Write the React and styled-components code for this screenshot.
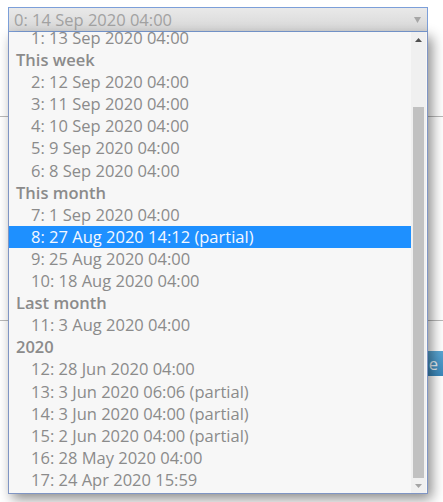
import React, { useLayoutEffect, useRef } from 'react';
import styled, { createGlobalStyle } from 'styled-components';

const GlobalStyle = createGlobalStyle`
  html, body {
    margin: 0;
    padding: 0;
    background: #ffffff;
    font-family: "Open Sans", "DejaVu Sans", sans-serif;
  }
  * { box-sizing: border-box; }
`;

// first group is the tail of "Yesterday", already scrolled past its label
const groups = [
  { label: null, items: [{ id: 1, text: '13 Sep 2020 04:00' }] },
  {
    label: 'This week',
    items: [
      { id: 2, text: '12 Sep 2020 04:00' },
      { id: 3, text: '11 Sep 2020 04:00' },
      { id: 4, text: '10 Sep 2020 04:00' },
      { id: 5, text: '9 Sep 2020 04:00' },
      { id: 6, text: '8 Sep 2020 04:00' },
    ],
  },
  {
    label: 'This month',
    items: [
      { id: 7, text: '1 Sep 2020 04:00' },
      { id: 8, text: '27 Aug 2020 14:12 (partial)' },
      { id: 9, text: '25 Aug 2020 04:00' },
      { id: 10, text: '18 Aug 2020 04:00' },
    ],
  },
  { label: 'Last month', items: [{ id: 11, text: '3 Aug 2020 04:00' }] },
  {
    label: '2020',
    items: [
      { id: 12, text: '28 Jun 2020 04:00' },
      { id: 13, text: '3 Jun 2020 06:06 (partial)' },
      { id: 14, text: '3 Jun 2020 04:00 (partial)' },
      { id: 15, text: '2 Jun 2020 04:00 (partial)' },
      { id: 16, text: '28 May 2020 04:00' },
      { id: 17, text: '24 Apr 2020 15:59' },
    ],
  },
];

const Page = styled.div`
  padding-top: 7px;
  height: 502px;
  overflow: hidden;
`;

const Header = styled.div`
  position: relative;
  padding-left: 8px;
  z-index: 2;
`;

const SelectBox = styled.div`
  width: 420px;
  height: 25px;
  display: flex;
  align-items: center;
  justify-content: space-between;
  padding: 0 6px 0 5px;
  border: 1px solid #7c9fd9;
  background: linear-gradient(#e9e9e9, #d7d7d7);
  color: #a2a2a2;
  font-size: 16.5px;
`;

const Panel = styled.div`
  height: ${(p) => p.h}px;
  border-bottom: 1px solid #b9b9b9;
`;

const ButtonRow = styled.div`
  display: flex;
  justify-content: flex-end;
  padding-top: 30px;
`;

const Button = styled.button`
  height: 25px;
  padding: 0 5px 0 12px;
  border: none;
  background: linear-gradient(#5aa6d3, #3b88bb);
  color: #e8f2f8;
  font-family: inherit;
  font-size: 16.5px;
`;

const Dropdown = styled.div`
  position: absolute;
  top: 25px;
  left: 8px;
  width: 420px;
  height: 462px;
  display: flex;
  background: #f7f7f7;
  border: 1px solid #7f95c4;
  border-top: none;
  box-shadow: 4px 5px 12px rgba(0, 0, 0, 0.45);
`;

const List = styled.div`
  flex: 1;
  overflow: hidden;
  font-size: 16.5px;
  line-height: 22.1px;
  color: #8b8b8b;
`;

const ListInner = styled.div`
  padding-bottom: 30px;
`;

const GroupLabel = styled.div`
  padding-left: 7px;
  font-weight: 600;
`;

const Option = styled.div`
  padding-left: 22px;
  white-space: nowrap;
  background: ${(p) => (p.selected ? '#1e90ff' : 'transparent')};
  color: ${(p) => (p.selected ? '#f4f8ff' : 'inherit')};
`;

const Scrollbar = styled.div`
  width: 15px;
  margin-right: 1px;
  display: flex;
  flex-direction: column;
  background: #f0f0f0;
`;

const ArrowCell = styled.div`
  height: 15px;
  display: flex;
  align-items: center;
  justify-content: center;
`;

const Track = styled.div`
  flex: 1;
  padding: 60px 2px 0;
  display: flex;
  flex-direction: column;
`;

const Thumb = styled.div`
  flex: 1;
  background: #c1c1c1;
`;

const Caret = ({ up, color, w = 7, h = 4 }) => (
  <svg width={w} height={h} viewBox={`0 0 ${w} ${h}`}>
    <polygon
      points={up ? `0,${h} ${w / 2},0 ${w},${h}` : `0,0 ${w},0 ${w / 2},${h}`}
      fill={color}
    />
  </svg>
);

export default function App() {
  const listRef = useRef(null);

  useLayoutEffect(() => {
    if (listRef.current) listRef.current.scrollTop = 5;
  }, []);

  return (
    <>
      <GlobalStyle />
      <Page>
        <Header>
          <SelectBox>
            <span>0: 14 Sep 2020 04:00</span>
            <Caret color="#a6a6a6" w={7} h={6} />
          </SelectBox>
          <Dropdown>
            <List ref={listRef}>
              <ListInner>
                {groups.map((g, i) => (
                  <div key={i}>
                    {g.label && <GroupLabel>{g.label}</GroupLabel>}
                    {g.items.map((o) => (
                      <Option key={o.id} selected={o.id === 8}>
                        {o.id}: {o.text}
                      </Option>
                    ))}
                  </div>
                ))}
              </ListInner>
            </List>
            <Scrollbar>
              <ArrowCell>
                <Caret up color="#505050" />
              </ArrowCell>
              <Track>
                <Thumb />
              </Track>
              <ArrowCell>
                <Caret color="#a4a4a4" />
              </ArrowCell>
            </Scrollbar>
          </Dropdown>
        </Header>
        <Panel h={85} />
        <Panel h={204} />
        <ButtonRow>
          <Button>Continue</Button>
        </ButtonRow>
      </Page>
    </>
  );
}
